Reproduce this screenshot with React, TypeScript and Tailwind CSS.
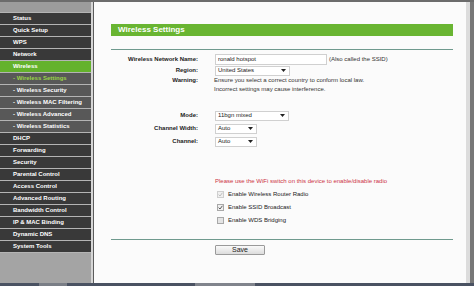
import React from "react";

type Item = { label: string; kind: "main" | "sub" | "green" | "active" };

const items: Item[] = [
  { label: "Status", kind: "main" },
  { label: "Quick Setup", kind: "main" },
  { label: "WPS", kind: "main" },
  { label: "Network", kind: "main" },
  { label: "Wireless", kind: "green" },
  { label: "- Wireless Settings", kind: "active" },
  { label: "- Wireless Security", kind: "sub" },
  { label: "- Wireless MAC Filtering", kind: "sub" },
  { label: "- Wireless Advanced", kind: "sub" },
  { label: "- Wireless Statistics", kind: "sub" },
  { label: "DHCP", kind: "main" },
  { label: "Forwarding", kind: "main" },
  { label: "Security", kind: "main" },
  { label: "Parental Control", kind: "main" },
  { label: "Access Control", kind: "main" },
  { label: "Advanced Routing", kind: "main" },
  { label: "Bandwidth Control", kind: "main" },
  { label: "IP & MAC Binding", kind: "main" },
  { label: "Dynamic DNS", kind: "main" },
  { label: "System Tools", kind: "main" },
];

function SideItem({ item }: { item: Item }) {
  const bg =
    item.kind === "green"
      ? "bg-[#64b22c]"
      : item.kind === "main"
      ? "bg-[#393939]"
      : "bg-[#585858]";
  const color = item.kind === "active" ? "text-[#98d447]" : "text-white";
  return (
    <div
      className={`h-[12px] border-b border-[#b4b4b4] ${bg} ${color} pl-[13px] text-[6px] leading-[11px] font-bold whitespace-nowrap`}
    >
      {item.label}
    </div>
  );
}

function Arrow() {
  return (
    <svg width="5" height="3" viewBox="0 0 5 3" className="shrink-0">
      <path d="M0 0 L5 0 L2.5 3 Z" fill="#222" />
    </svg>
  );
}

function Select({ value, w }: { value: string; w: string }) {
  return (
    <div
      className={`${w} h-[10px] bg-white border border-[#d0d0d0] flex items-center justify-between pl-[2px] pr-[3px] text-[6px] text-[#222]`}
    >
      <span>{value}</span>
      <Arrow />
    </div>
  );
}

function Row({
  label,
  h,
  children,
}: {
  label: string;
  h: string;
  children: React.ReactNode;
}) {
  return (
    <div className={`flex items-center ${h}`}>
      <div className="w-[87px] text-right font-bold text-[6px] text-[#222] whitespace-nowrap">
        {label}
      </div>
      <div className="ml-[17px] flex items-center">{children}</div>
    </div>
  );
}

function Checkbox({ state }: { state: "disabled" | "checked" | "off" }) {
  const border = state === "disabled" ? "border-[#cfcfcf]" : "border-[#a8a8a8]";
  const bg = state === "off" ? "bg-[#e4e4e4]" : "bg-[#f0f0f0]";
  return (
    <div className={`w-[7px] h-[7px] border ${border} ${bg} flex items-center justify-center`}>
      {state !== "off" && (
        <svg width="5" height="5" viewBox="0 0 5 5">
          <path
            d="M0.6 2.6 L2 4 L4.4 0.8"
            stroke={state === "disabled" ? "#b8b8b8" : "#4a4a4a"}
            strokeWidth="0.9"
            fill="none"
          />
        </svg>
      )}
    </div>
  );
}

function CheckRow({ label, state }: { label: string; state: "disabled" | "checked" | "off" }) {
  return (
    <div className="h-[13px] flex items-center pl-[104px]">
      <div className="ml-[2px]">
        <Checkbox state={state} />
      </div>
      <span className="ml-[4px] text-[6px] text-[#222] whitespace-nowrap">{label}</span>
    </div>
  );
}

export default function App() {
  return (
    <div className="w-[474px] h-[286px] flex flex-col overflow-hidden bg-[#9c9c9c] font-['Liberation_Sans',Arial,sans-serif]">
      <div className="h-[2px] bg-[#6c6c6c] shrink-0" />
      <div className="flex flex-1 min-h-0">
        <aside className="w-[91px] shrink-0 bg-[#a4a4a4] flex flex-col">
          <div className="h-[10px] bg-[#9c9c9c] border-b border-[#b4b4b4] box-content" />
          {items.map((it) => (
            <SideItem key={it.label} item={it} />
          ))}
        </aside>
        <div className="w-[2px] shrink-0 bg-[#d6d6d6]" />
        <div className="w-[1px] shrink-0 bg-[#5c5c5c]" />
        <main className="w-[372px] shrink-0 bg-[#fbfbfb] pl-[17px] pt-[22px] flex flex-col">
          <div className="w-[342px] h-[12px] bg-[#69b532] text-white font-bold text-[8px] leading-[12px] pl-[7px]">
            Wireless Settings
          </div>
          <div className="w-[342px] h-[1px] bg-[#6f9a8e] mt-[13px]" />
          <div className="mt-[3px] flex flex-col">
            <Row label="Wireless Network Name:" h="h-[12px]">
              <div className="w-[112px] h-[11px] bg-white border border-[#d0d0d0] pl-[2px] text-[6px] leading-[9px] text-[#222]">
                ronald hotspot
              </div>
              <span className="ml-[2px] text-[6px] text-[#333] whitespace-nowrap">
                (Also called the SSID)
              </span>
            </Row>
            <Row label="Region:" h="h-[11px]">
              <Select value="United States" w="w-[75px]" />
            </Row>
            <div className="flex">
              <div className="w-[87px] text-right font-bold text-[6px] leading-[9px] text-[#222]">
                Warning:
              </div>
              <div className="ml-[16px] text-[6px] leading-[9px] text-[#333] whitespace-nowrap">
                Ensure you select a correct country to conform local law.
                <br />
                Incorrect settings may cause interference.
              </div>
            </div>
          </div>
          <div className="mt-[15px] flex flex-col">
            <Row label="Mode:" h="h-[13px]">
              <Select value="11bgn mixed" w="w-[74px]" />
            </Row>
            <Row label="Channel Width:" h="h-[13px]">
              <Select value="Auto" w="w-[42px]" />
            </Row>
            <Row label="Channel:" h="h-[13px]">
              <Select value="Auto" w="w-[42px]" />
            </Row>
          </div>
          <div className="mt-[28px] h-[10px] pl-[104px] text-[6px] leading-[10px] text-[#cc3344] whitespace-nowrap">
            Please use the WiFi switch on this device to enable/disable radio
          </div>
          <div className="mt-[2px] flex flex-col">
            <CheckRow label="Enable Wireless Router Radio" state="disabled" />
            <CheckRow label="Enable SSID Broadcast" state="checked" />
            <CheckRow label="Enable WDS Bridging" state="off" />
          </div>
          <div className="w-[342px] h-[1px] bg-[#6f9a8e] mt-[12px]" />
          <div className="mt-[5px] pl-[104px]">
            <div className="w-[50px] h-[10px] rounded-[1px] border border-[#9a9a9a] bg-gradient-to-b from-[#fafafa] to-[#dcdcdc] text-center text-[7px] leading-[8px] text-[#222]">
              Save
            </div>
          </div>
        </main>
        <div className="w-[4px] shrink-0 bg-[#dcdcdc]" />
        <div className="flex-1 bg-[#777777]" />
      </div>
      <div className="h-[3px] shrink-0 flex">
        <div className="w-[39px] bg-[#4a5262]" />
        <div className="w-[28px] bg-[#7a7e86]" />
        <div className="w-[128px] bg-[#4a5262]" />
        <div className="w-[60px] bg-[#80848c]" />
        <div className="flex-1 bg-[#4a5262]" />
      </div>
    </div>
  );
}
